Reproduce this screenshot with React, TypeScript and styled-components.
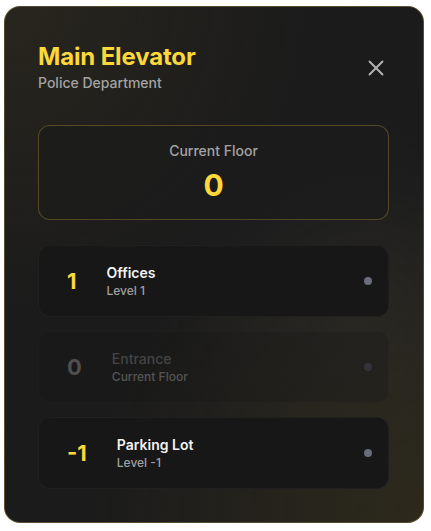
import React from "react";
import styled, { createGlobalStyle } from "styled-components";

const Global = createGlobalStyle`
  html, body { margin: 0; padding: 0; background: #ffffff; }
  body { font-family: Inter, "Noto Sans", sans-serif; -webkit-font-smoothing: antialiased; }
  * { box-sizing: border-box; }
`;

const Page = styled.div`
  padding: 6px 7px 8px 4px;
`;

const Card = styled.div`
  width: 420px;
  height: 517px;
  border-radius: 16px;
  border: 1px solid rgba(150, 132, 70, 0.45);
  background:
    radial-gradient(circle at 100% 100%, rgba(80, 68, 30, 0.35) 0%, rgba(80, 68, 30, 0) 50%),
    radial-gradient(circle at 0% 0%, rgba(70, 62, 35, 0.3) 0%, rgba(70, 62, 35, 0) 45%),
    radial-gradient(circle at 85% 60%, rgba(40, 40, 40, 0.6) 0%, rgba(40, 40, 40, 0) 40%),
    #1b1b1b;
  padding: 35px 34px 33px 33px;
  display: flex;
  flex-direction: column;
`;

const Header = styled.div`
  display: flex;
  justify-content: space-between;
  align-items: center;
  margin-bottom: 32px;
`;

const TitleBlock = styled.div`
  display: flex;
  flex-direction: column;
`;

const Title = styled.h1`
  margin: 0 0 1px;
  font-size: 24px;
  line-height: 30px;
  font-weight: 700;
  color: #fcd83a;
  letter-spacing: -0.15px;
`;

const Subtitle = styled.div`
  font-size: 14px;
  line-height: 20px;
  color: #a3a3a3;
  font-weight: 500;
`;

const CloseButton = styled.button`
  background: none;
  border: none;
  padding: 0;
  margin-right: 3px;
  width: 20px;
  height: 20px;
  display: flex;
  align-items: center;
  justify-content: center;
  color: #b4b4b4;
  cursor: pointer;
`;

const CurrentBox = styled.div`
  border: 1px solid rgba(160, 138, 50, 0.42);
  border-radius: 12px;
  background: rgba(28, 28, 28, 0.9);
  padding: 15px 16px 16px;
  display: flex;
  flex-direction: column;
  align-items: center;
  margin-bottom: 25px;
`;

const CurrentLabel = styled.div`
  font-size: 14px;
  line-height: 20px;
  color: #a3a3a3;
  font-weight: 500;
`;

const CurrentValue = styled.div`
  margin-top: 6px;
  font-size: 30px;
  line-height: 36px;
  font-weight: 700;
  color: #fcd83a;
`;

const List = styled.div`
  display: flex;
  flex-direction: column;
  gap: 14px;
`;

const Row = styled.div<{ $disabled?: boolean }>`
  height: 72px;
  flex-shrink: 0;
  border-radius: 12px;
  border: 1px solid ${(p) => (p.$disabled ? "rgba(255,255,255,0.02)" : "rgba(255,255,255,0.04)")};
  background: ${(p) => (p.$disabled ? "rgba(22,22,22,0.3)" : "#171717")};
  display: flex;
  align-items: center;
  padding: 0 16px 0 28px;
`;

const Num = styled.div<{ $disabled?: boolean }>`
  font-size: 22px;
  line-height: 28px;
  font-weight: 700;
  color: ${(p) => (p.$disabled ? "#4f4f4f" : "#fcd83a")};
  margin-right: 30px;
`;

const Info = styled.div`
  flex: 1;
  display: flex;
  flex-direction: column;
`;

const RowTitle = styled.div<{ $disabled?: boolean }>`
  font-size: 14px;
  line-height: 20px;
  font-weight: ${(p) => (p.$disabled ? 500 : 600)};
  color: ${(p) => (p.$disabled ? "#454545" : "#f2f2f2")};
`;

const RowSub = styled.div<{ $disabled?: boolean }>`
  font-size: 12px;
  line-height: 16px;
  font-weight: 500;
  color: ${(p) => (p.$disabled ? "#555555" : "#a0a0a0")};
`;

const Dot = styled.div<{ $disabled?: boolean }>`
  width: 8px;
  height: 8px;
  border-radius: 50%;
  background: ${(p) => (p.$disabled ? "#333438" : "#6a6e7a")};
`;

const floors = [
  { n: "1", name: "Offices", sub: "Level 1", disabled: false },
  { n: "0", name: "Entrance", sub: "Current Floor", disabled: true },
  { n: "-1", name: "Parking Lot", sub: "Level -1", disabled: false },
];

export default function App() {
  return (
    <>
      <Global />
      <Page>
        <Card>
          <Header>
            <TitleBlock>
              <Title>Main Elevator</Title>
              <Subtitle>Police Department</Subtitle>
            </TitleBlock>
            <CloseButton aria-label="Close">
              <svg width="16" height="16" viewBox="0 0 16 16" fill="none" stroke="currentColor" strokeWidth="1.9" strokeLinecap="round">
                <path d="M1.5 1.5 L14.5 14.5 M14.5 1.5 L1.5 14.5" />
              </svg>
            </CloseButton>
          </Header>
          <CurrentBox>
            <CurrentLabel>Current Floor</CurrentLabel>
            <CurrentValue>0</CurrentValue>
          </CurrentBox>
          <List>
            {floors.map((f) => (
              <Row key={f.n} $disabled={f.disabled}>
                <Num $disabled={f.disabled}>{f.n}</Num>
                <Info>
                  <RowTitle $disabled={f.disabled}>{f.name}</RowTitle>
                  <RowSub $disabled={f.disabled}>{f.sub}</RowSub>
                </Info>
                <Dot $disabled={f.disabled} />
              </Row>
            ))}
          </List>
        </Card>
      </Page>
    </>
  );
}
